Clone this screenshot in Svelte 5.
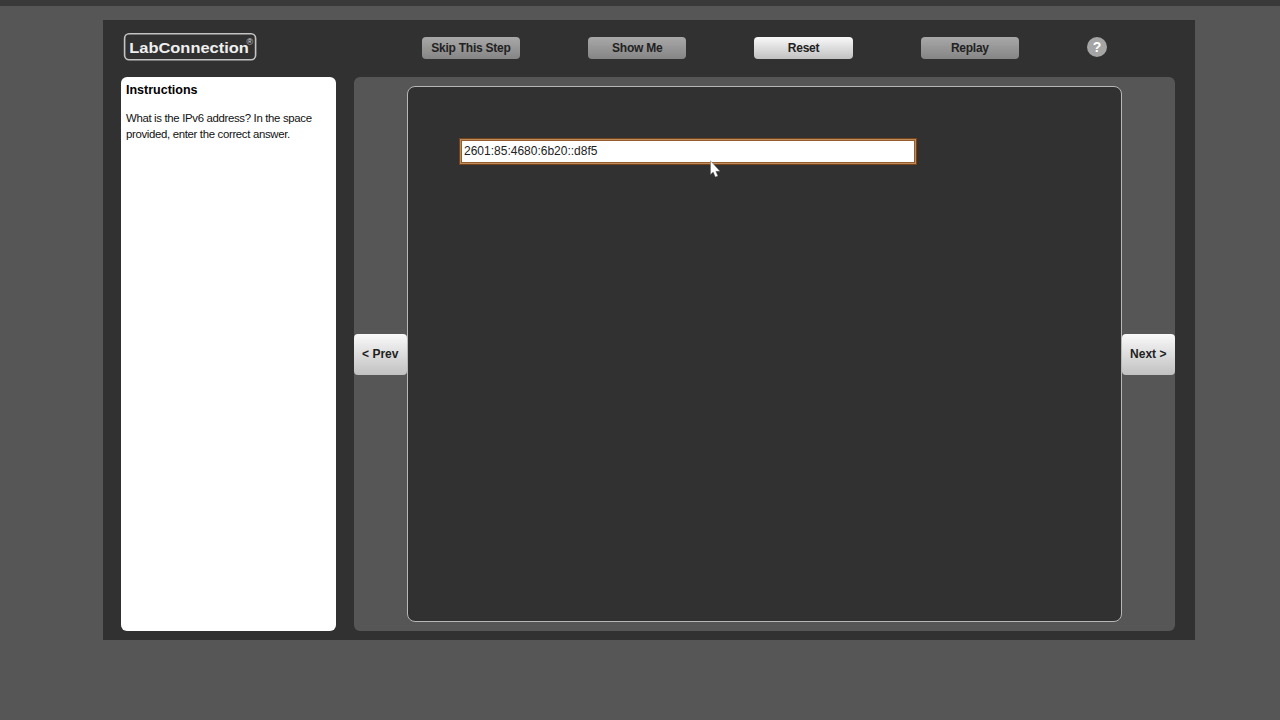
<script lang="ts">
	interface Action {
		label: string;
		enabled: boolean;
	}

	const actions: Action[] = [
		{ label: 'Skip This Step', enabled: false },
		{ label: 'Show Me', enabled: false },
		{ label: 'Reset', enabled: true },
		{ label: 'Replay', enabled: false }
	];

	const initialAnswer = '2601:85:4680:6b20::d8f5';
	let answer = $state(initialAnswer);

	function run(action: Action) {
		if (action.label === 'Reset') answer = initialAnswer;
	}
</script>

<div class="page">
	<div class="lab">
		<header class="toolbar">
			<svg class="logo" width="134" height="29" viewBox="0 0 134 29" role="img" aria-label="LabConnection">
				<rect x="1.6" y="0.8" width="131" height="26" rx="4.5" fill="none" stroke="#c4c4c4" stroke-width="1.6" />
				<text x="6.3" y="19.6" font-size="15.5" font-weight="700" textLength="119.5" lengthAdjust="spacingAndGlyphs" fill="#efefef">LabConnection</text>
				<text x="123.5" y="12.2" font-size="9" fill="#dddddd">®</text>
			</svg>
			<nav class="actions">
				{#each actions as action}
					<button class="btn action" class:dim={!action.enabled} disabled={!action.enabled} onclick={() => run(action)}>
						{action.label}
					</button>
				{/each}
			</nav>
			<button class="help" aria-label="Help">?</button>
		</header>

		<div class="body">
			<aside class="instructions">
				<h2>Instructions</h2>
				<p>What is the IPv6 address? In the space provided, enter the correct answer.</p>
			</aside>

			<main class="stage">
				<button class="btn prev">&lt; Prev</button>
				<section class="canvas">
					<input class="answer" type="text" aria-label="Answer" spellcheck="false" bind:value={answer} />
				</section>
				<button class="btn next">Next &gt;</button>
			</main>
		</div>
	</div>

	<svg class="cursor" width="11" height="19" viewBox="0 0 11 19" aria-hidden="true">
		<path d="M.5.8v13.8l2.7-2.5 2.1 4.9 2.6-1.1-2.1-4.6H10z" fill="#fff" stroke="#555" stroke-width=".4" />
	</svg>
</div>

<style>
	:global(body) {
		background: #565656;
		overflow: hidden;
	}

	.page {
		position: relative;
		box-sizing: border-box;
		height: 720px;
		padding: 14px 85px 0 103px;
		border-top: 6px solid #393939;
		background: #565656;
		font-family: 'Liberation Sans', Arial, sans-serif;
	}

	.lab {
		box-sizing: border-box;
		height: 620px;
		padding: 0 20px 9px 18px;
		display: flex;
		flex-direction: column;
		background: #313131;
	}

	/* Toolbar */
	.toolbar {
		height: 57px;
		flex: none;
		display: flex;
		align-items: flex-start;
	}
	.logo {
		margin: 13px 0 0 2px;
		flex: none;
		font-family: inherit;
	}
	.actions {
		display: flex;
		gap: 67.8px;
		margin: 17px 0 0 164.7px;
	}
	.btn {
		box-sizing: border-box;
		padding: 0;
		border: 0;
		border-radius: 4px;
		background: linear-gradient(#f9f9f9, #c1c1c1);
		color: #222;
		font: bold 12px 'Liberation Sans', Arial, sans-serif;
		white-space: nowrap;
	}
	.action {
		width: 98.5px;
		height: 22px;
		letter-spacing: -0.25px;
	}
	.dim {
		background: linear-gradient(#a8a8a8, #858585);
	}
	.help {
		width: 20px;
		height: 20px;
		margin: 17px 0 0 68px;
		padding: 0;
		border: 0;
		border-radius: 50%;
		background: #a5a5a5;
		color: #fff;
		font: bold 14px/20px 'Liberation Sans', Arial, sans-serif;
	}

	/* Instructions panel and step area */
	.body {
		flex: 1;
		display: flex;
		gap: 18px;
		min-height: 0;
	}
	.instructions {
		box-sizing: border-box;
		width: 214.5px;
		flex: none;
		padding: 6px 5px;
		border-radius: 6px;
		background: #fff;
		color: #111;
	}
	h2 {
		margin: 0 0 12px;
		font-size: 12.5px;
		line-height: 15px;
		color: #000;
	}
	p {
		margin: 0;
		font-size: 11.4px;
		letter-spacing: -0.33px;
		line-height: 16px;
	}

	.stage {
		flex: 1;
		display: flex;
		align-items: center;
		border-radius: 6px;
		background: #565656;
	}
	.prev,
	.next {
		width: 53.5px;
		height: 41px;
		flex: none;
	}
	.canvas {
		box-sizing: border-box;
		flex: 1;
		height: 536px;
		margin-bottom: 1px;
		padding: 51px;
		border: 1px solid #b5b8b5;
		border-radius: 8px;
		background: #313131;
	}
	.answer {
		box-sizing: border-box;
		display: block;
		width: 458px;
		height: 27px;
		padding: 0 4px;
		border: 1px solid #75431a;
		outline: none;
		background: #fff;
		box-shadow:
			inset 0 0 0 1px #c08c5c,
			inset 0 0 0 2px #945e30;
		color: #222;
		font: 12px 'Liberation Sans', Arial, sans-serif;
	}

	.cursor {
		position: absolute;
		left: 710px;
		top: 154px;
	}
</style>
